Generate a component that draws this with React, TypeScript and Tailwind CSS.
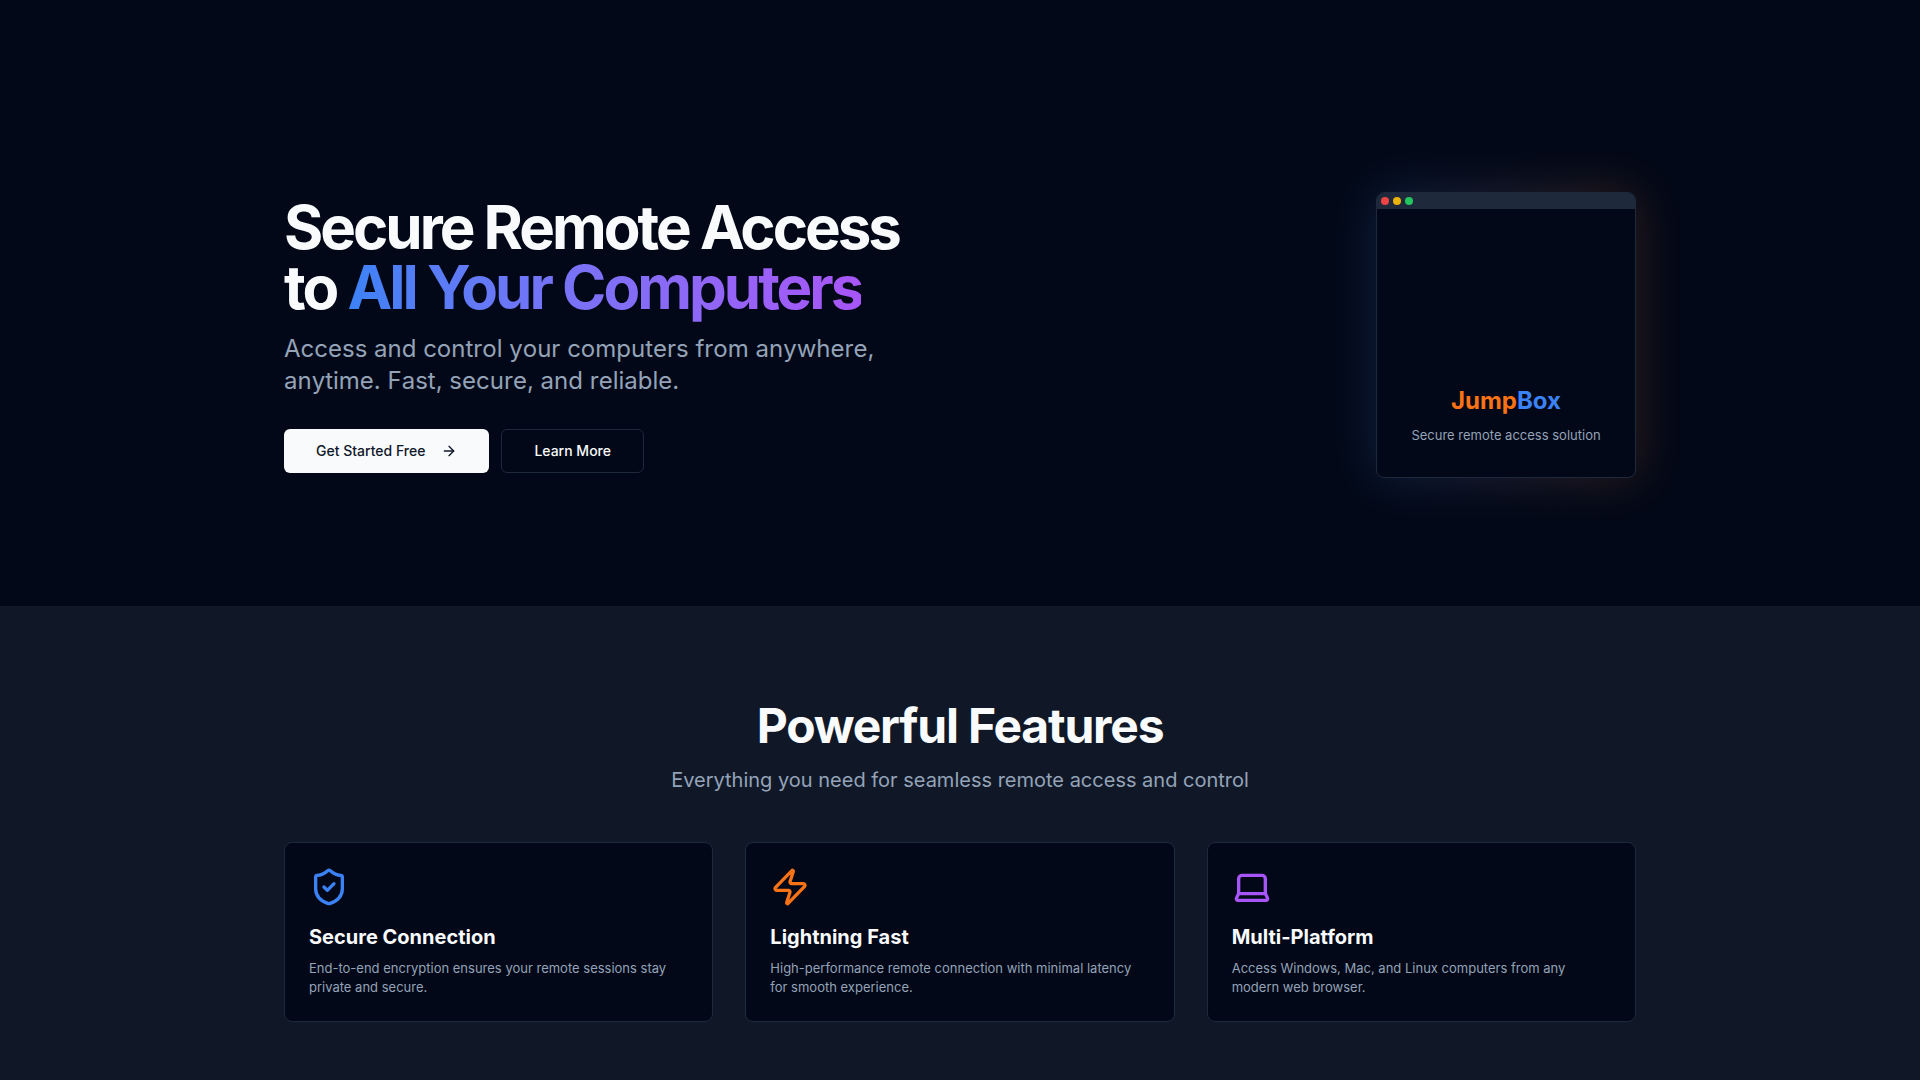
import { ArrowRight, Laptop, ShieldCheck, Zap } from "lucide-react";
import type { LucideIcon } from "lucide-react";

type Feature = { icon: LucideIcon; color: string; title: string; text: string };

const features: Feature[] = [
  {
    icon: ShieldCheck,
    color: "text-[#3b82f6]",
    title: "Secure Connection",
    text: "End-to-end encryption ensures your remote sessions stay private and secure.",
  },
  {
    icon: Zap,
    color: "text-[#f97316]",
    title: "Lightning Fast",
    text: "High-performance remote connection with minimal latency for smooth experience.",
  },
  {
    icon: Laptop,
    color: "text-[#a855f7]",
    title: "Multi-Platform",
    text: "Access Windows, Mac, and Linux computers from any modern web browser.",
  },
];

function Hero() {
  return (
    <section className="bg-[#020817] pt-48 pb-32">
      <div className="mx-auto flex max-w-[1400px] items-center justify-between gap-12 px-6">
        <div className="max-w-[640px]">
          <h1 className="text-[60px] leading-[60px] font-bold tracking-tighter">
            Secure Remote Access
            <br />
            to{" "}
            <span className="bg-linear-to-r from-[#3b82f6] to-[#a855f7] bg-clip-text text-transparent">
              All Your Computers
            </span>
          </h1>
          <p className="mt-4 max-w-[600px] text-2xl text-[#94a3b8] [font-kerning:none]">
            Access and control your computers from anywhere, anytime. Fast, secure, and reliable.
          </p>
          <div className="mt-8 flex gap-3">
            <button
              type="button"
              className="flex h-11 items-center gap-4 rounded-md bg-[#f8fafc] px-8 text-sm font-medium text-[#0f172a]"
            >
              Get Started Free
              <ArrowRight className="size-4" />
            </button>
            <button
              type="button"
              className="flex h-11 items-center rounded-md border border-[#1e293b] px-8 text-sm font-medium"
            >
              Learn More
            </button>
          </div>
        </div>
        <div className="relative">
          <div className="absolute inset-0 rounded-lg bg-linear-to-r from-[#3b82f6] to-[#f97316] opacity-20 blur-xl" />
          <div className="relative flex h-[286px] w-[260px] flex-col overflow-hidden rounded-lg border border-[#1e293b] bg-[#020817]">
            <div className="flex h-4 shrink-0 items-center gap-1 bg-[#1e293b] px-1">
              <span className="size-2 rounded-full bg-[#ef4444]" />
              <span className="size-2 rounded-full bg-[#eab308]" />
              <span className="size-2 rounded-full bg-[#22c55e]" />
            </div>
            <div className="flex flex-1 flex-col items-center justify-end pb-8 text-center">
              <div className="text-2xl font-bold">
                <span className="text-[#f97316]">Jump</span>
                <span className="text-[#3b82f6]">Box</span>
              </div>
              <p className="mt-2 text-[13px] leading-5 text-[#94a3b8]">Secure remote access solution</p>
            </div>
          </div>
        </div>
      </div>
    </section>
  );
}

function FeatureCard({ icon: Icon, color, title, text }: Feature) {
  return (
    <article className="rounded-lg border border-[#1e293b] bg-[#020817] p-6">
      <Icon className={"size-10 " + color} />
      <h3 className="mt-4 text-xl leading-7 font-bold">{title}</h3>
      <p className="mt-2 text-[13px] leading-[19px] text-[#94a3b8]">{text}</p>
    </article>
  );
}

export default function App() {
  return (
    <main className="flex min-h-screen flex-col bg-[#020817] font-['Inter',sans-serif] text-[#f8fafc]">
      <Hero />
      <section className="flex-1 bg-[#101827] pt-24 pb-14">
        <div className="mx-auto max-w-[1400px] px-6">
          <h2 className="text-center text-5xl leading-[48px] font-bold tracking-tight">Powerful Features</h2>
          <p className="mt-4 text-center text-xl leading-7 text-[#94a3b8]">
            Everything you need for seamless remote access and control
          </p>
          <div className="mt-12 grid grid-cols-3 gap-8">
            {features.map((f) => (
              <FeatureCard key={f.title} {...f} />
            ))}
          </div>
        </div>
      </section>
    </main>
  );
}
